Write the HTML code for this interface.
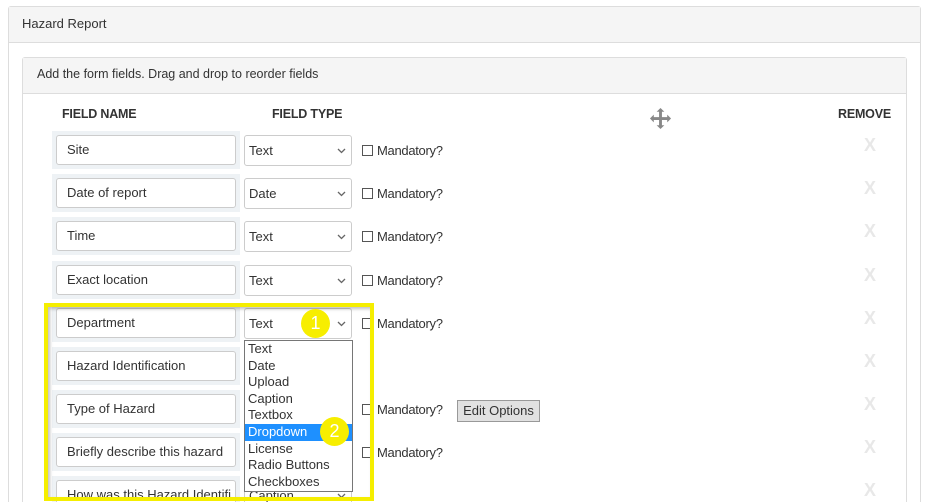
<!DOCTYPE html>
<html><head><meta charset="utf-8"><style>
*{box-sizing:border-box;margin:0;padding:0}
html,body{width:927px;height:502px;overflow:hidden}
body{background:#fff;font-family:"Liberation Sans",Arial,sans-serif;color:#333;position:relative;font-size:13px}
.abs{position:absolute}
.outer{left:8px;top:6px;width:913px;height:520px;border:1px solid #ddd;border-radius:3px}
.ohead{left:9px;top:7px;width:911px;height:36px;background:#f5f5f5;border-bottom:1px solid #ddd}
.inner{left:22px;top:57px;width:885px;height:470px;border:1px solid #ddd;border-radius:3px}
.ihead{left:23px;top:58px;width:883px;height:36px;background:#f5f5f5;border-bottom:1px solid #ddd}
.th{font-weight:bold;font-size:12.5px;color:#333;letter-spacing:-0.2px}
.rowbg{left:52px;width:188px;height:38px;background:#eef2f5}
.inp{left:56px;width:180px;height:30px;background:#fff;border:1px solid #ccc;border-radius:3px;padding-left:10px;line-height:28px;font-size:13px;white-space:nowrap;overflow:hidden}
.sel{left:244px;width:108px;height:31px;background:#fff;border:1px solid #ccc;border-radius:3px;padding-left:4px;line-height:29px;font-size:13px}
.sel svg{position:absolute;right:5px;top:12px}
.cb{left:362px;width:11px;height:11px;border:1px solid #555;background:#fff}
.mand{left:377px;font-size:13px;letter-spacing:-0.3px}
.x{left:864px;font-weight:bold;font-size:18px;color:#e8e8e8}
</style></head><body>
<div class="abs outer"></div>
<div class="abs ohead"></div>
<div class="abs" style="left:22px;top:16px;font-size:13px">Hazard Report</div>
<div class="abs inner"></div>
<div class="abs ihead"></div>
<div class="abs" style="left:37px;top:67px;font-size:12.5px">Add the form fields. Drag and drop to reorder fields</div>
<div class="abs th" style="left:62px;top:107px">FIELD NAME</div>
<div class="abs th" style="left:272px;top:107px">FIELD TYPE</div>
<div class="abs th" style="left:838px;top:107px">REMOVE</div>
<svg class="abs" style="left:649px;top:107px" width="23" height="23" viewBox="0 0 24 24"><path fill="#888" d="M12 1l4 4h-2.5v5.5H19V8l4 4-4 4v-2.5h-5.5V19H16l-4 4-4-4h2.5v-5.5H5V16l-4-4 4-4v2.5h5.5V5H8z"/></svg>

<div class="abs rowbg" style="top:131px"></div><div class="abs inp" style="top:135px">Site</div>
<div class="abs rowbg" style="top:174px"></div><div class="abs inp" style="top:178px">Date of report</div>
<div class="abs rowbg" style="top:217px"></div><div class="abs inp" style="top:221px">Time</div>
<div class="abs rowbg" style="top:261px"></div><div class="abs inp" style="top:265px">Exact location</div>
<div class="abs rowbg" style="top:304px"></div><div class="abs inp" style="top:308px">Department</div>
<div class="abs rowbg" style="top:347px"></div><div class="abs inp" style="top:351px">Hazard Identification</div>
<div class="abs rowbg" style="top:390px"></div><div class="abs inp" style="top:394px">Type of Hazard</div>
<div class="abs rowbg" style="top:433px"></div><div class="abs inp" style="top:437px">Briefly describe this hazard</div>
<div class="abs rowbg" style="top:476px"></div><div class="abs inp" style="top:480px">How was this Hazard Identifi</div>

<div class="abs sel" style="top:135px">Text<svg width="9" height="6"><path d="M1 1l3.5 3.5L8 1" stroke="#666" fill="none" stroke-width="1.3"/></svg></div>
<div class="abs sel" style="top:178px">Date<svg width="9" height="6"><path d="M1 1l3.5 3.5L8 1" stroke="#666" fill="none" stroke-width="1.3"/></svg></div>
<div class="abs sel" style="top:221px">Text<svg width="9" height="6"><path d="M1 1l3.5 3.5L8 1" stroke="#666" fill="none" stroke-width="1.3"/></svg></div>
<div class="abs sel" style="top:265px">Text<svg width="9" height="6"><path d="M1 1l3.5 3.5L8 1" stroke="#666" fill="none" stroke-width="1.3"/></svg></div>
<div class="abs sel" style="top:308px">Text<svg width="9" height="6"><path d="M1 1l3.5 3.5L8 1" stroke="#666" fill="none" stroke-width="1.3"/></svg></div>
<div class="abs sel" style="top:480px">Caption<svg width="9" height="6"><path d="M1 1l3.5 3.5L8 1" stroke="#666" fill="none" stroke-width="1.3"/></svg></div>

<div class="abs cb" style="top:145px"></div><div class="abs mand" style="top:143px">Mandatory?</div>
<div class="abs cb" style="top:188px"></div><div class="abs mand" style="top:186px">Mandatory?</div>
<div class="abs cb" style="top:231px"></div><div class="abs mand" style="top:229px">Mandatory?</div>
<div class="abs cb" style="top:275px"></div><div class="abs mand" style="top:273px">Mandatory?</div>
<div class="abs cb" style="top:318px"></div><div class="abs mand" style="top:316px">Mandatory?</div>
<div class="abs cb" style="top:404px"></div><div class="abs mand" style="top:402px">Mandatory?</div>
<div class="abs cb" style="top:447px"></div><div class="abs mand" style="top:445px">Mandatory?</div>

<div class="abs" style="left:457px;top:400px;width:83px;height:22px;background:#e1e1e1;border:1px solid #999;font-size:13px;text-align:center;line-height:19px">Edit Options</div>

<div class="abs x" style="top:135px">X</div>
<div class="abs x" style="top:178px">X</div>
<div class="abs x" style="top:221px">X</div>
<div class="abs x" style="top:265px">X</div>
<div class="abs x" style="top:308px">X</div>
<div class="abs x" style="top:351px">X</div>
<div class="abs x" style="top:394px">X</div>
<div class="abs x" style="top:437px">X</div>
<div class="abs x" style="top:480px">X</div>

<div class="abs" style="left:244px;top:340px;width:109px;height:152px;background:#fff;border:1px solid #767676;font-size:13px;line-height:16.6px">
<div style="padding-left:3px">Text</div>
<div style="padding-left:3px">Date</div>
<div style="padding-left:3px">Upload</div>
<div style="padding-left:3px">Caption</div>
<div style="padding-left:3px">Textbox</div>
<div style="padding-left:3px;background:#1e90ff;color:#fff">Dropdown</div>
<div style="padding-left:3px">License</div>
<div style="padding-left:3px">Radio Buttons</div>
<div style="padding-left:3px">Checkboxes</div>
</div>

<div class="abs" style="left:44px;top:303px;width:330px;height:198px;border:4px solid #f5ee00;box-shadow:inset 2px 2px 3px rgba(0,0,0,.25)"></div>
<div class="abs" style="left:301px;top:309px;width:29px;height:29px;border-radius:50%;background:#f7ee00;color:#fff;font-size:18px;text-align:center;line-height:29px">1</div>
<div class="abs" style="left:320px;top:417px;width:29px;height:29px;border-radius:50%;background:#f7ee00;color:#fff;font-size:18px;text-align:center;line-height:29px">2</div>
</body></html>
